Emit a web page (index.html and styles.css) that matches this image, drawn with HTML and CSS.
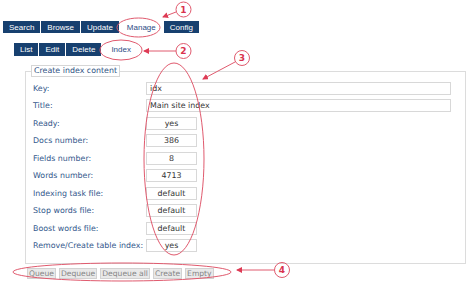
FILE: index.html
```html
<html>
<head>
<link rel="stylesheet" href="styles.css">
</head>
<body>
<div id="page">
	<div class="tabs main">
		<a href="#" class="tab">Search</a>
		<a href="#" class="tab">Browse</a>
		<a href="#" class="tab">Update</a>
		<a href="#" class="tab active">Manage</a>
		<a href="#" class="tab">Config</a>
	</div>
	<div class="tabs sub">
		<a href="#" class="tab">List</a>
		<a href="#" class="tab">Edit</a>
		<a href="#" class="tab">Delete</a>
		<a href="#" class="tab active">Index</a>
	</div>
	<fieldset class="panel">
		<legend>Create index content</legend>
		<div class="form">
			<label>Key:</label><input type="text" class="wide" value="idx">
			<label>Title:</label><input type="text" class="wide" value="Main site index">
			<label>Ready:</label><input type="text" class="small" value="yes">
			<label>Docs number:</label><input type="text" class="small" value="386">
			<label>Fields number:</label><input type="text" class="small" value="8">
			<label>Words number:</label><input type="text" class="small" value="4713">
			<label>Indexing task file:</label><input type="text" class="small" value="default">
			<label>Stop words file:</label><input type="text" class="small" value="default">
			<label>Boost words file:</label><input type="text" class="small" value="default">
			<label>Remove/Create table index:</label><input type="text" class="small" value="yes">
		</div>
	</fieldset>
	<div class="actions">
		<button>Queue</button>
		<button>Dequeue</button>
		<button>Dequeue all</button>
		<button>Create</button>
		<button>Empty</button>
	</div>
</div>
<svg class="notes" width="474" height="284" viewBox="0 0 474 284">
	<defs>
		<marker id="head" markerWidth="6" markerHeight="6" refX="5" refY="3" orient="auto">
			<path d="M0,0 L6,3 L0,6 z" fill="#de3b55"/>
		</marker>
	</defs>
	<g fill="none" stroke="#e05a6e" stroke-width="1">
		<ellipse cx="138.5" cy="27.5" rx="21.5" ry="9.5"/>
		<ellipse cx="121" cy="50" rx="21" ry="10"/>
		<ellipse cx="174" cy="159" rx="30" ry="96"/>
		<ellipse cx="122" cy="272" rx="109" ry="9"/>
		<circle cx="183.5" cy="9.5" r="7.5"/>
		<circle cx="183.5" cy="51" r="7.5"/>
		<circle cx="242" cy="58" r="7.5"/>
		<circle cx="282" cy="270" r="7.5"/>
		<line x1="176" y1="12" x2="163" y2="17" marker-end="url(#head)"/>
		<line x1="176" y1="51" x2="144" y2="51" marker-end="url(#head)"/>
		<line x1="235" y1="62" x2="203" y2="79" marker-end="url(#head)"/>
		<line x1="274" y1="270" x2="237" y2="270" marker-end="url(#head)"/>
	</g>
	<g class="num">
		<text x="183.5" y="12.5">1</text>
		<text x="183.5" y="54">2</text>
		<text x="242" y="61">3</text>
		<text x="282" y="273">4</text>
	</g>
</svg>
</body>
</html>
```

FILE: styles.css
```css
html,body {
	margin: 0;
	padding: 0;
	background: #fff;
	font-family: "DejaVu Sans", Verdana, sans-serif;
}
#page {
	padding-top: 21px;
}

.tabs {
	display: flex;
	gap: 1px;
}
.tabs.main {
	margin-left: 3px;
	height: 12px;
}
.tabs.sub {
	margin: 10px 0 0 14px;
	height: 13px;
}
.tab {
	display: flex;
	align-items: center;
	padding: 0 6px;
	background: #17406f;
	color: #fff;
	font-family: "Liberation Sans", Arial, sans-serif;
	font-size: 8px;
	text-decoration: none;
}
.tab.active {
	background: #fff;
	color: #2d4c85;
	padding: 0 7px;
}
.tabs.sub .tab.active {
	padding: 0 9px;
}

.panel {
	margin: 9px 8px 0 25px;
	padding: 5px 7px 11px 7px;
	border: 1px solid #dcdcdc;
}
.panel legend {
	margin-left: -2px;
	padding: 0 2px;
	height: 10px;
	line-height: 10px;
	border: 1px solid #d6d6d6;
	font-size: 7.9px;
	color: #2f5283;
}
.form {
	display: grid;
	grid-template-columns: 113px 1fr;
	grid-auto-rows: 13px;
	row-gap: 4.45px;
	align-items: center;
}
.form label {
	font-size: 7.9px;
	color: #34588c;
}
.form input {
	box-sizing: border-box;
	height: 13px;
	margin: 0;
	padding: 0 3px;
	border: 1px solid #d8d8d8;
	background: #fff;
	font-family: "DejaVu Sans", Verdana, sans-serif;
	font-size: 7.9px;
	color: #333;
	outline: none;
}
.form input.wide {
	width: 305px;
}
.form input.small {
	width: 51px;
	text-align: center;
}

.actions {
	display: flex;
	gap: 3px;
	margin: 4px 0 0 27px;
}
.actions button {
	height: 11px;
	margin: 0;
	padding: 0 1px;
	border: 1px solid #d2d2d2;
	background: #e9e9e9;
	font-family: "DejaVu Sans", Verdana, sans-serif;
	font-size: 7.6px;
	line-height: 9px;
	color: #858585;
}

.notes {
	position: absolute;
	top: 0;
	left: 0;
	pointer-events: none;
}
.notes .num text {
	fill: #d9324e;
	font-family: "DejaVu Sans", sans-serif;
	font-size: 9px;
	font-weight: bold;
	text-anchor: middle;
}
```
